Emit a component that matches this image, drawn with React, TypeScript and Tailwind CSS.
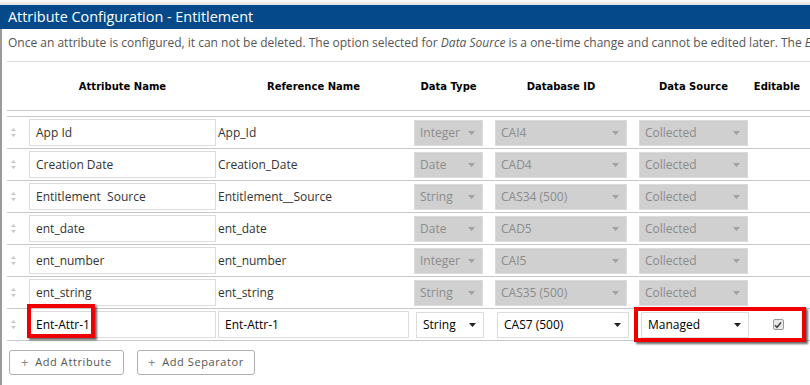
import React from "react";

interface Attr {
  name: string;
  ref: string;
  type: string;
  dbId: string;
  source: string;
}

const ROWS: Attr[] = [
  { name: "App Id", ref: "App_Id", type: "Integer", dbId: "CAI4", source: "Collected" },
  { name: "Creation Date", ref: "Creation_Date", type: "Date", dbId: "CAD4", source: "Collected" },
  { name: "Entitlement  Source", ref: "Entitlement__Source", type: "String", dbId: "CAS34 (500)", source: "Collected" },
  { name: "ent_date", ref: "ent_date", type: "Date", dbId: "CAD5", source: "Collected" },
  { name: "ent_number", ref: "ent_number", type: "Integer", dbId: "CAI5", source: "Collected" },
  { name: "ent_string", ref: "ent_string", type: "String", dbId: "CAS35 (500)", source: "Collected" },
];

const font = "font-['Open_Sans',_'Liberation_Sans',_sans-serif]";

function Caret({ dark }: { dark?: boolean }) {
  return (
    <svg width="7" height="4" viewBox="0 0 7 4" className="shrink-0">
      <path d="M0 0h7L3.5 4z" fill={dark ? "#222" : "#a0a0a0"} />
    </svg>
  );
}

function Handle() {
  return (
    <svg width="5" height="9" viewBox="0 0 5 9">
      <path d="M2.5 0L5 3H0z M2.5 9L0 6h5z" fill="#c8c8c8" />
    </svg>
  );
}

function LockedSelect({ value, width }: { value: string; width: string }) {
  return (
    <div
      className={`${width} h-[26px] flex items-center justify-between pl-[5px] pr-[7px] bg-[#d0d0d0] border border-[#dadada] text-[12px] text-[#8c8c8c]`}
    >
      <span>{value}</span>
      <Caret />
    </div>
  );
}

function OpenSelect({ value, width }: { value: string; width: string }) {
  return (
    <div
      className={`${width} h-[26px] flex items-center justify-between pl-[6px] pr-[7px] bg-white border border-[#dcdcdc] text-[12px] text-black`}
    >
      <span>{value}</span>
      <Caret dark />
    </div>
  );
}

export default function App() {
  return (
    <div className={`relative w-[810px] h-[385px] overflow-hidden bg-white ${font}`}>
      <div className="h-[5px] bg-gradient-to-b from-white to-[#dedede]" />
      <div className="h-[24px] bg-[#05498a] pl-[8px] flex items-center text-[14.4px] text-white whitespace-nowrap">
        Attribute Configuration - Entitlement
      </div>

      <div className="border-l-2 border-[#9a9a9a] h-[356px] pl-[5px]">
        <div className="h-[32px] pt-[5px] pl-[1px] leading-[18px] text-[12px] text-[#555] whitespace-nowrap overflow-hidden">
          Once an attribute is configured, it can not be deleted. The option selected for <i>Data Source</i> is a
          one-time change and cannot be edited later. The <i>Editable</i> option can be changed at any time.
        </div>
        <div className="border-t border-[#dcdcdc]" />

        {/* Header */}
        <div className="h-[49px] flex items-center border-b border-[#c8c8c8] font-['DejaVu_Sans',_sans-serif] font-bold text-[10px] text-black">
          <div className="w-[22px]" />
          <div className="w-[189px] text-center pr-[2px]">Attribute Name</div>
          <div className="w-[196px] text-center pr-[5px]">Reference Name</div>
          <div className="w-[81px] pr-[12px] text-center">Data Type</div>
          <div className="w-[144px] pr-[12px] text-center">Database ID</div>
          <div className="w-[113px] pr-[4px] text-center">Data Source</div>
          <div className="w-[50px] text-center">Editable</div>
        </div>
        <div className="h-[5px]" />

        {/* Rows */}
        <div className="border-t border-[#c8c8c8] text-[12px]">
          {ROWS.map((r) => (
            <div key={r.name} className="h-[32px] flex items-center border-b border-[#c8c8c8]">
              <div className="w-[22px] pl-[4px] flex items-center">
                <Handle />
              </div>
              <div className="w-[189px]">
                <div className="w-[187px] h-[27px] flex items-center pl-[6px] border border-[#dcdcdc] text-[#333] whitespace-pre">
                  {r.name}
                </div>
              </div>
              <div className="w-[196px] text-[#333]">{r.ref}</div>
              <div className="w-[81px]">
                <LockedSelect value={r.type} width="w-[69px]" />
              </div>
              <div className="w-[144px]">
                <LockedSelect value={r.dbId} width="w-[132px]" />
              </div>
              <div className="w-[113px]">
                <LockedSelect value={r.source} width="w-[109px]" />
              </div>
              <div className="w-[50px]" />
            </div>
          ))}

          {/* New row */}
          <div className="h-[32px] flex items-center border-b border-[#c8c8c8]">
            <div className="w-[22px] pl-[4px] flex items-center">
              <Handle />
            </div>
            <div className="w-[189px]">
              <div className="w-[187px] h-[27px] flex items-center pl-[6px] border border-[#dcdcdc] text-black">
                Ent-Attr-1
              </div>
            </div>
            <div className="w-[196px]">
              <div className="w-[191px] h-[27px] flex items-center pl-[6px] border border-[#dcdcdc] text-black">
                Ent-Attr-1
              </div>
            </div>
            <div className="w-[81px] pl-[2px]">
              <OpenSelect value="String" width="w-[68px]" />
            </div>
            <div className="w-[144px] pl-[2px]">
              <OpenSelect value="CAS7 (500)" width="w-[132px]" />
            </div>
            <div className="w-[113px] pl-[2px]">
              <OpenSelect value="Managed" width="w-[108px]" />
            </div>
            <div className="w-[50px] flex justify-center pl-[2px]">
              <div className="w-[11px] h-[11px] rounded-[2px] border border-[#9a9a9a] bg-[#e8e8e8] flex items-center justify-center">
                <svg width="8" height="8" viewBox="0 0 8 8">
                  <path d="M1 4.2l2 2L7 1.5" stroke="#444" strokeWidth="1.6" fill="none" />
                </svg>
              </div>
            </div>
          </div>
        </div>

        {/* Actions */}
        <div className="flex gap-[13px] mt-[9px] pl-[2px] text-[11px] tracking-[0.6px] text-[#555]">
          <button className="w-[115px] h-[25px] flex items-center justify-center gap-[6px] border border-[#b0b0b0] rounded-[3px] bg-white">
            <span className="text-[#888] text-[13px]">+</span>
            Add Attribute
          </button>
          <button className="w-[118px] h-[25px] flex items-center justify-center gap-[6px] border border-[#b0b0b0] rounded-[3px] bg-white">
            <span className="text-[#888] text-[13px]">+</span>
            Add Separator
          </button>
        </div>
      </div>

      {/* Highlight boxes */}
      <div className="absolute left-[27px] top-[304px] w-[68px] h-[34px] border-4 border-[#ee0000] shadow-[2px_2px_2px_rgba(0,0,0,0.6)]" />
      <div className="absolute left-[634px] top-[307px] w-[172px] h-[35px] border-4 border-[#ee0000] shadow-[2px_2px_2px_rgba(0,0,0,0.6)]" />
    </div>
  );
}
